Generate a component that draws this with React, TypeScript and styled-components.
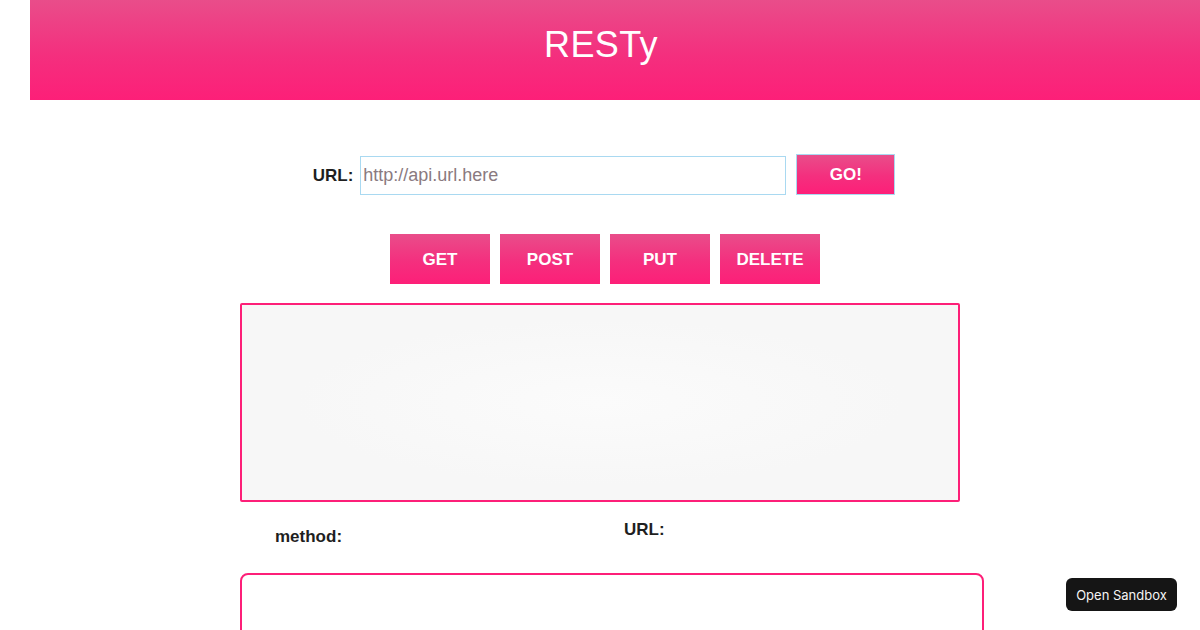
import React from 'react'
import styled, { createGlobalStyle } from 'styled-components'

const GlobalStyle = createGlobalStyle`
  html, body {
    margin: 0;
    padding: 0;
    background: #ffffff;
    font-family: "Liberation Sans", Arial, sans-serif;
    color: #1f1f1f;
    overflow: hidden;
  }
`

const pinkGradient = 'linear-gradient(to bottom, #e94d8a 0%, #f42f7e 55%, #fd1f78 100%)'

const Page = styled.div`
  width: 1200px;
  height: 630px;
  overflow: hidden;
`

const Header = styled.header`
  box-sizing: border-box;
  margin-left: 30px;
  height: 100px;
  padding-bottom: 10px;
  display: flex;
  align-items: center;
  justify-content: center;
  background: ${pinkGradient};
`

const Title = styled.h1`
  margin: 0 0 0 -28px;
  font-weight: 400;
  font-size: 36px;
  color: #ffffff;
  letter-spacing: 0.4px;
`

const Main = styled.main`
  width: 720px;
  margin: 0 auto;
  display: flex;
  flex-direction: column;
`

const UrlForm = styled.form`
  margin-top: 54px;
  padding-left: 8px;
  display: flex;
  align-items: center;
  justify-content: center;
`

const Label = styled.label`
  font-weight: 700;
  font-size: 17px;
  margin-right: 7px;
  padding-top: 2px;
`

const UrlInput = styled.input`
  box-sizing: border-box;
  width: 426px;
  height: 39px;
  margin-top: 2px;
  border: 1px solid #a9d9f1;
  padding: 0 2px;
  font-family: "Liberation Sans", Arial, sans-serif;
  font-size: 18px;
  outline: none;
  &::placeholder {
    color: #8a7a80;
  }
`

const GoButton = styled.button`
  box-sizing: border-box;
  margin-left: 10px;
  width: 99px;
  height: 41px;
  border: 1px solid #a9d9f1;
  background: ${pinkGradient};
  color: #ffffff;
  font-family: "Liberation Sans", Arial, sans-serif;
  font-weight: 700;
  font-size: 17px;
`

const Methods = styled.div`
  margin-top: 39px;
  padding-left: 10px;
  display: flex;
  justify-content: center;
  gap: 10px;
`

const MethodButton = styled.button`
  width: 100px;
  height: 50px;
  padding-top: 2px;
  border: none;
  background: ${pinkGradient};
  color: #ffffff;
  font-family: "Liberation Sans", Arial, sans-serif;
  font-weight: 700;
  font-size: 17px;
`

const Output = styled.div`
  box-sizing: border-box;
  margin-top: 19px;
  width: 720px;
  height: 199px;
  border: 2px solid #fd1f78;
  border-radius: 2px;
  background: radial-gradient(ellipse at center, #fbfbfb 0%, #f7f7f7 60%, #f7f7f7 100%);
`

const Results = styled.div`
  height: 71px;
  display: grid;
  grid-template-columns: 360px 360px;
`

const ResultLabel = styled.div<{ $indent: number; $top: number }>`
  padding-left: ${p => p.$indent}px;
  padding-top: ${p => p.$top}px;
  font-weight: 700;
  font-size: 17px;
`

const History = styled.div`
  box-sizing: border-box;
  width: 744px;
  height: 120px;
  border: 2px solid #fd1f78;
  border-radius: 8px;
  background: #ffffff;
`

const SandboxButton = styled.button`
  position: fixed;
  right: 23px;
  bottom: 19px;
  width: 111px;
  height: 33px;
  border: none;
  border-radius: 6px;
  background: #151515;
  color: #f4f4f4;
  font-family: Inter, "Liberation Sans", sans-serif;
  font-size: 13px;
`

const methods = ['GET', 'POST', 'PUT', 'DELETE']

export default function App() {
  return (
    <Page>
      <GlobalStyle />
      <Header>
        <Title>RESTy</Title>
      </Header>
      <Main>
        <UrlForm onSubmit={e => e.preventDefault()}>
          <Label htmlFor="url">URL:</Label>
          <UrlInput id="url" placeholder="http://api.url.here" />
          <GoButton type="submit">GO!</GoButton>
        </UrlForm>
        <Methods>
          {methods.map(m => (
            <MethodButton key={m}>{m}</MethodButton>
          ))}
        </Methods>
        <Output />
        <Results>
          <ResultLabel $indent={35} $top={25}>method:</ResultLabel>
          <ResultLabel $indent={24} $top={18}>URL:</ResultLabel>
        </Results>
        <History />
      </Main>
      <SandboxButton>Open Sandbox</SandboxButton>
    </Page>
  )
}
